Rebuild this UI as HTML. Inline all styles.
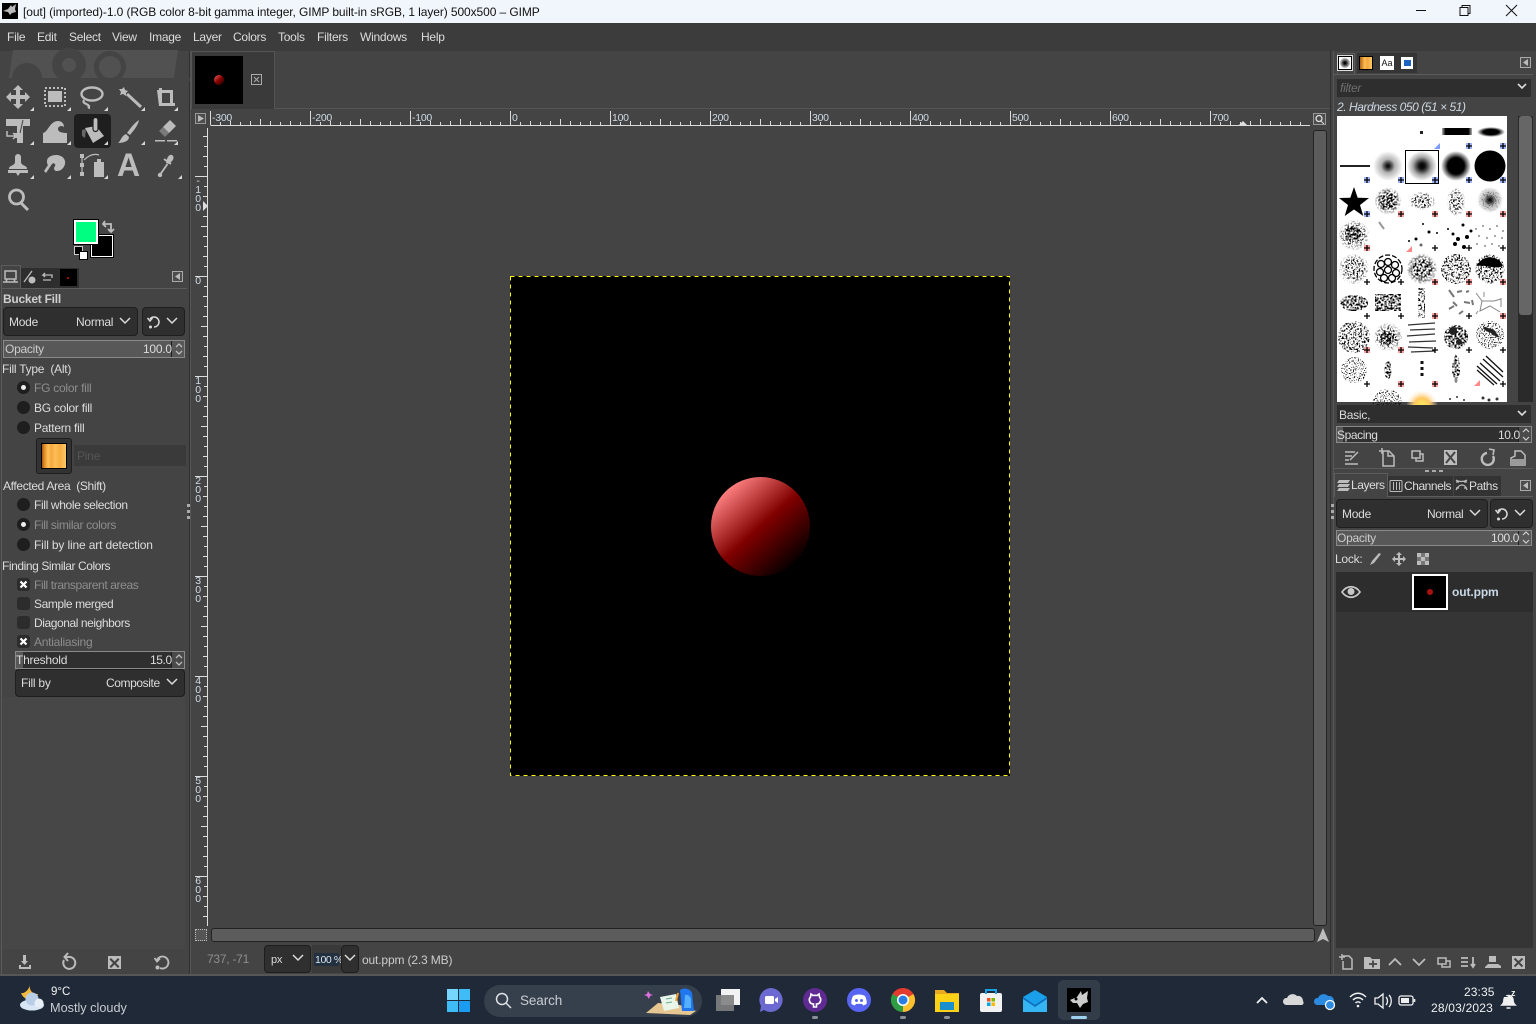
<!DOCTYPE html>
<html><head><meta charset="utf-8"><title>GIMP</title>
<style>
html,body{margin:0;padding:0;width:1536px;height:1024px;overflow:hidden;background:#444;font-family:"Liberation Sans",sans-serif;font-size:12px;color:#dcdcdc}
.a{position:absolute}
.t{position:absolute;white-space:nowrap;line-height:14px;letter-spacing:-.25px}
.d{color:#8e8e8e}
.c{position:absolute;box-sizing:border-box;background:#2f2f2f;border:1px solid #1e1e1e;border-radius:4px}
.s{position:absolute;box-sizing:border-box;border:1px solid #8a8a8a;background:#2f2f2f}
.s i{position:absolute;left:0;top:0;bottom:0;background:#585858}
.s b{position:absolute;right:0;top:0;bottom:0;width:12px;background:#4a4a4a;border-left:1px solid #1e1e1e}
.r{position:absolute;width:13px;height:13px;border-radius:50%;background:#1e1e1e}
.r.on:after{content:"";position:absolute;left:4px;top:4px;width:5px;height:5px;border-radius:50%;background:#eee}
.k{position:absolute;width:13px;height:13px;border-radius:3px;background:#2c2c2c;border:0}
svg{position:absolute;overflow:visible}
</style></head><body>

<!-- title bar -->
<div class="a" style="left:0;top:0;width:1536px;height:23px;background:#f1f6fc"></div>
<div class="a" style="left:2px;top:3px;width:16px;height:16px;background:#000"></div>
<svg style="left:2px;top:3px" width="16" height="16"><path d="M1 8l5-2 3-4 1 2 4-3-1 5 1 3-4 1-2 2-2-3z" fill="#bbb"/></svg>
<div class="t" style="left:23px;top:5px;color:#111;letter-spacing:-.09px">[out] (imported)-1.0 (RGB color 8-bit gamma integer, GIMP built-in sRGB, 1 layer) 500x500 – GIMP</div>
<svg style="left:1410px;top:0" width="120" height="22" fill="none" stroke="#111" stroke-width="1"><path d="M6 10.5h10"/><path d="M50 7.500h8v8h-8zM52 7.500v-2h8v8h-2"/><path d="M96 5l11 11M107 5L96 16"/></svg>

<!-- menu -->
<div class="a" style="left:0;top:23px;width:1536px;height:28px;background:#3c3c3c"></div>
<div class="t" style="left:7px;top:30px">File</div>
<div class="t" style="left:37px;top:30px">Edit</div>
<div class="t" style="left:69px;top:30px">Select</div>
<div class="t" style="left:112px;top:30px">View</div>
<div class="t" style="left:149px;top:30px">Image</div>
<div class="t" style="left:193px;top:30px">Layer</div>
<div class="t" style="left:233px;top:30px">Colors</div>
<div class="t" style="left:278px;top:30px">Tools</div>
<div class="t" style="left:317px;top:30px">Filters</div>
<div class="t" style="left:360px;top:30px">Windows</div>
<div class="t" style="left:421px;top:30px">Help</div>

<!-- panel frames -->
<div class="a" style="left:189px;top:51px;width:1px;height:925px;background:#2f2f2f"></div>
<div class="a" style="left:190px;top:51px;width:1px;height:925px;background:#575757"></div>
<div class="a" style="left:1330px;top:51px;width:1px;height:925px;background:#2f2f2f"></div>
<div class="a" style="left:1333px;top:51px;width:1px;height:925px;background:#575757"></div>
<div class="a" style="left:0;top:974px;width:1536px;height:2px;background:#565656"></div>

<!-- toolbox watermark -->
<svg style="left:0;top:0" width="190" height="80"><path d="M13 50H178L174 78H9Z" fill="#515151"/><circle cx="27" cy="78" r="15" fill="#444"/><circle cx="69" cy="65" r="17" fill="#444"/><circle cx="69" cy="65" r="7" fill="#515151"/><circle cx="110" cy="67" r="16" fill="#444"/><circle cx="110" cy="67" r="11" fill="#515151"/><rect x="0" y="78" width="190" height="3" fill="#444"/></svg>

<!-- active tool -->
<div class="a" style="left:74px;top:114px;width:37px;height:34px;background:#1e1e1e;border-radius:4px"></div>

<!-- tool icons -->
<svg style="left:0;top:0" width="190" height="220" fill="#bcbcbc">
<path d="M18 85l5 5h-3v5h5v-3l5 5-5 5v-3h-5v5h3l-5 5-5-5h3v-5h-5v3l-5-5 5-5v3h5v-5h-3z"/>
<path d="M45 88h20v18H45z" fill="none" stroke="#bcbcbc" stroke-width="2" stroke-dasharray="2 2"/><rect x="48" y="91" width="14" height="11"/>
<ellipse cx="92" cy="94" rx="10.500" ry="6.500" fill="none" stroke="#bcbcbc" stroke-width="2.400"/><path d="M84 100c-2 4 3 3 5 6-1 1 0 2 1 2" fill="none" stroke="#bcbcbc" stroke-width="2.200"/>
<path d="M127 94l14 13" stroke="#bcbcbc" stroke-width="3"/><path d="M124 87l1 3 3 1-2 2 0 3-3-2-3 1 1-3-2-3h3z"/>
<path d="M157 90h2v-2h3v2h11v13h2v3h-16zM162 93v10h8V93z" fill-rule="evenodd"/>
<path d="M6 119h24v7h-7v17h-6v-5h-3v-5h3v-7H6z"/><path d="M23 120l-3 13" stroke="#444" stroke-width="1"/><path d="M7 131v5h9M13 133l3 3-3 3" fill="none" stroke="#bcbcbc" stroke-width="1.500"/>
<path d="M43 143v-10c5-1 7-12 15-12 4 0 6 3 6 6-2-2-6-1-6 2s4 4 9 4v10z"/>
<path d="M82 130l4-1-1 9-3-2z" fill="#666"/><path d="M85 128l11-2 8 10-11 7z"/><path d="M93 129v-9a2.500 2.500 0 015 0v9a2.500 2.500 0 01-5 0z" stroke="#1e1e1e" stroke-width="1.200"/>
<path d="M139 120c-1 6-6 11-9 15l-3-2c3-4 7-10 12-13zM126 134l3 3c0 4-5 6-11 6 3-2 3-7 8-9z"/>
<path d="M170 120l6 6-7 7-6-6z"/><path d="M163 127l6 6-4 4-6-6z" fill="#7a7a7a"/><path d="M155 140h10v1.500h-10zM167 140h10v1.500h-10z"/>
<path d="M15 157a3 3 0 016 0v5c0 2 2 3 4 4 2 1 2 2 2 3H9c0-1 0-2 2-3 2-1 4-2 4-4zM8 170h20v3h-8l-2 3-2-3H8z"/>
<path d="M47 161c0-4 5-6 9-6 6 0 10 4 9 9-1 4-4 7-8 7-2 0-3-1-3-3 0-1 2-2 1-4-1-1-2-1-3 0l-6 9-2-2 4-6c-1-1-1-2-1-4z"/>
<path d="M80 154h4v4h-4zM80 163h4v4h-4zM80 172h4v4h-4z"/><path d="M82 158v5M82 167v5M84 160c4-4 9-7 15-5" fill="none" stroke="#bcbcbc" stroke-width="1.200"/><path d="M97 159h4v3h3v15H94v-15h3z"/>
<circle cx="160" cy="175" r="2.200"/><path d="M160.500 174l7-10" stroke="#bcbcbc" stroke-width="1.800"/><path d="M166 163l1-4c1-3 3-5 5-4 2 1 2 4 0 6l-3 3z"/><path d="M164 159l7 5" stroke="#bcbcbc" stroke-width="1.800"/>
<circle cx="16.500" cy="197" r="7" fill="none" stroke="#bcbcbc" stroke-width="2.800"/><path d="M21 203l7 7" stroke="#bcbcbc" stroke-width="3"/>
<g fill="#d8d8d8"><path d="M34 107v4h-4zM71 107v4h-4zM108 107v4h-4zM145 107v4h-4zM178 107v4h-4zM34 141v4h-4zM71 141v4h-4zM108 141v4h-4zM145 141v4h-4zM178 141v4h-4zM34 175v4h-4zM71 175v4h-4zM108 175v4h-4zM182 175v4h-4z"/></g>
</svg>
<div class="t" style="left:117px;top:149px;font-size:32px;line-height:32px;font-weight:bold;color:#bcbcbc;letter-spacing:0">A</div>

<!-- fg/bg -->
<div class="a" style="left:90px;top:234px;width:24px;height:24px;box-sizing:border-box;background:#000;border:2px solid #fff;outline:1px solid #000;outline-offset:-1px"></div>
<div class="a" style="left:74px;top:220px;width:24px;height:24px;box-sizing:border-box;background:#00ff80;border:2px solid #fff;box-shadow:0 0 0 1px #000"></div>
<div class="a" style="left:74px;top:246px;width:7px;height:7px;background:#000;border:1px solid #ccc"></div>
<div class="a" style="left:79px;top:251px;width:7px;height:7px;background:#fff;border:1px solid #000"></div>
<svg style="left:102px;top:220px" width="13" height="13" fill="none" stroke="#bcbcbc" stroke-width="1.800"><path d="M1 4h8v7M3 1L1 4l3 3M6 9l3 3 3-3"/></svg>

<!-- options tabs -->
<div class="a" style="left:21px;top:268px;width:58px;height:20px;background:#2e2e2e"></div>
<div class="a" style="left:1px;top:265px;width:20px;height:23px;box-sizing:border-box;background:#444;border:1px solid #5c5c5c;border-bottom:0"></div>
<svg style="left:0;top:265px" width="80" height="24" fill="none" stroke="#bcbcbc" stroke-width="1.500"><path d="M5 6h11v8H5zM7 14l-1 3M14 14l1 3M3 17h15"/><path d="M24 17l8-11M47 10h-4l2-2m-2 2l2 2M43 10h9v3M51 15h-8" stroke-width="1.300"/><circle cx="32" cy="15" r="3.500" fill="#bcbcbc" stroke="none"/></svg>
<div class="a" style="left:60px;top:269px;width:17px;height:17px;background:#000"></div>
<div class="a" style="left:67px;top:277px;width:2px;height:2px;background:#a00"></div>
<svg style="left:172px;top:271px" width="11" height="11"><rect x=".5" y=".5" width="10" height="10" fill="#4d4d4d" stroke="#aaa"/><path d="M8 2v7L3 5.500z" fill="#bbb"/></svg>
<div class="a" style="left:1px;top:288px;width:186px;height:1px;background:#5c5c5c"></div>
<div class="a" style="left:1px;top:288px;width:1px;height:686px;background:#5c5c5c"></div>

<!-- tool options -->
<div class="t" style="left:3px;top:292px;font-weight:bold;color:#cfcfcf">Bucket Fill</div>
<div class="c" style="left:3px;top:307px;width:135px;height:29px"></div>
<div class="t" style="left:9px;top:315px">Mode</div><div class="t" style="left:76px;top:315px">Normal</div>
<div class="c" style="left:142px;top:307px;width:43px;height:29px"></div>
<svg style="left:0;top:300px" width="190" height="40" fill="none" stroke="#dcdcdc" stroke-width="1.500"><path d="M120 18l5 5 5-5M167 18l5 5 5-5"/><path d="M150 19a5 5 0 114 8M147.500 18l2.500 3 2.500-3"/><circle cx="150.500" cy="27" r="1.500" fill="#dcdcdc" stroke="none"/></svg>

<div class="s" style="left:3px;top:340px;width:182px;height:18px;background:#585858"><b style="background:#585858"></b></div>
<div class="t" style="left:5px;top:342px;color:#ccc">Opacity</div><div class="t" style="left:143px;top:342px">100.0</div>
<div class="t" style="left:2px;top:362px">Fill Type&nbsp; (Alt)</div>
<div class="r on" style="left:17px;top:381px"></div><div class="t d" style="left:34px;top:381px">FG color fill</div>
<div class="r" style="left:17px;top:401px"></div><div class="t" style="left:34px;top:401px">BG color fill</div>
<div class="r" style="left:17px;top:421px"></div><div class="t" style="left:34px;top:421px">Pattern fill</div>
<div class="a" style="left:36px;top:438px;width:36px;height:36px;box-sizing:border-box;background:#333;border:1px solid #1e1e1e;border-radius:3px"></div>
<div class="a" style="left:41px;top:443px;width:26px;height:26px;box-sizing:border-box;border:1px solid #000;background:linear-gradient(90deg,#a85c10 0,#e8932b 12%,#ffc15a 25%,#f3a83f 40%,#ffbe55 55%,#f6ad44 75%,#ffc866 100%)"></div>
<div class="a" style="left:74px;top:445px;width:112px;height:21px;background:#3a3a3a"></div>
<div class="t" style="left:77px;top:449px;color:#555">Pine</div>
<div class="t" style="left:3px;top:479px;letter-spacing:-.35px">Affected Area&nbsp; (Shift)</div>
<div class="r" style="left:17px;top:498px"></div><div class="t" style="left:34px;top:498px;letter-spacing:-.35px">Fill whole selection</div>
<div class="r on" style="left:17px;top:518px"></div><div class="t d" style="left:34px;top:518px;letter-spacing:-.35px">Fill similar colors</div>
<div class="r" style="left:17px;top:538px"></div><div class="t" style="left:34px;top:538px;letter-spacing:-.15px">Fill by line art detection</div>
<div class="t" style="left:2px;top:559px;letter-spacing:-.42px">Finding Similar Colors</div>
<div class="k" style="left:17px;top:578px"></div><div class="t d" style="left:34px;top:578px;letter-spacing:-.38px">Fill transparent areas</div>
<div class="k" style="left:17px;top:597px"></div><div class="t" style="left:34px;top:597px;letter-spacing:-.42px">Sample merged</div>
<div class="k" style="left:17px;top:616px"></div><div class="t" style="left:34px;top:616px;letter-spacing:-.42px">Diagonal neighbors</div>
<div class="k" style="left:17px;top:635px"></div><div class="t d" style="left:34px;top:635px">Antialiasing</div>
<svg style="left:17px;top:578px" width="13" height="70" stroke="#fff" stroke-width="2.200"><path d="M3.500 3.500l6 6M9.500 3.500l-6 6M3.500 60.500l6 6M9.500 60.500l-6 6"/></svg>
<div class="s" style="left:15px;top:651px;width:170px;height:18px"><i style="width:7px"></i><b></b></div>
<div class="t" style="left:16px;top:653px">Threshold</div><div class="t" style="left:150px;top:653px;letter-spacing:-.4px">15.0</div>
<div class="c" style="left:15px;top:669px;width:170px;height:28px"></div>
<div class="t" style="left:21px;top:676px">Fill by</div><div class="t" style="left:106px;top:676px;letter-spacing:-.4px">Composite</div>
<svg style="left:0;top:340px" width="190" height="350" fill="none" stroke="#bbb" stroke-width="1.300"><path d="M176 7l3-3 3 3M176 11l3 3 3-3M176 318l3-3 3 3M176 322l3 3 3-3"/><path d="M167 339l5 5 5-5" stroke="#dcdcdc" stroke-width="1.500"/></svg>
<div class="a" style="left:3px;top:697px;width:182px;height:252px;background:#474747"></div>
<div class="a" style="left:187px;top:504px;width:3px;height:18px;background:repeating-linear-gradient(#aaa 0 3px,transparent 3px 6px)"></div>
<svg style="left:0;top:950px" width="190" height="24" fill="#bcbcbc"><path d="M23 5h3v6h2l-3.500 4L21 11h2zM19 15h2v2h8v-2h2v4H19z"/><path d="M64 10a6 6 0 104-3h-3M68 3l-3.500 4 3.500 4" fill="none" stroke="#bcbcbc" stroke-width="2"/><path d="M108 6h13v13h-13z"/><path d="M111 8l3.500 3.500L118 8l1.500 1.500-3.500 3.500 3.500 3.500-1.500 1.500-3.500-3.500-3.500 3.500-1.500-1.500 3.500-3.500L109.500 9.500z" fill="#444"/><path d="M157 10a6 6 0 113 8M154.500 8l2.500 3.500 3-3" fill="none" stroke="#bcbcbc" stroke-width="1.800"/><circle cx="157.500" cy="17.500" r="2"/></svg>

<!-- image tab -->
<div class="a" style="left:191px;top:51px;width:84px;height:58px;box-sizing:border-box;background:#3a3a3a;border:1px solid #555;border-bottom:0"></div>
<div class="a" style="left:195px;top:56px;width:48px;height:48px;background:#000"></div>
<div class="a" style="left:214px;top:75px;width:10px;height:10px;border-radius:50%;background:linear-gradient(138deg,#e66 0,#800 50%,#100 100%)"></div>
<svg style="left:251px;top:74px" width="12" height="12" fill="none" stroke="#aaa"><path d="M.5.500h10v10H.500zM3 3l5 5M8 3L3 8"/></svg>
<div class="a" style="left:275px;top:108px;width:1055px;height:1px;background:#555"></div>

<!-- rulers -->
<svg style="left:0;top:0" width="1536" height="976" stroke="#dcdcdc" fill="none">
<defs>
<pattern id="hr" patternUnits="userSpaceOnUse" x="210" y="110" width="100" height="16"><path d="M.5 1v15M10.500 12v4M20.500 11v5M30.500 12v4M40.500 11v5M50.500 9v7M60.500 11v5M70.500 12v4M80.500 11v5M90.500 12v4"/></pattern>
<pattern id="vr" patternUnits="userSpaceOnUse" x="192" y="76" width="16" height="100"><path d="M3 .5h13M12 10.500h4M11 20.500h5M12 30.500h4M11 40.500h5M9 50.500h7M11 60.500h5M12 70.500h4M11 80.500h5M12 90.500h4"/></pattern>
</defs>
<rect x="210" y="110" width="1100" height="15.500" fill="url(#hr)" stroke="none"/>
<path d="M211 125.500H1310"/>
<rect x="192" y="127" width="16" height="798" fill="url(#vr)" stroke="none"/>
<path d="M207.500 128V926"/>
</svg>
<svg style="left:195px;top:113px" width="12" height="12"><rect x=".5" y=".5" width="10" height="10" fill="#4d4d4d" stroke="#999"/><path d="M3 2v7l6-3.500z" fill="#bbb"/></svg>
<svg style="left:1313px;top:113px" width="14" height="13"><rect x=".5" y=".5" width="12" height="11" fill="#4d4d4d" stroke="#999"/><circle cx="6" cy="5.500" r="3" fill="none" stroke="#ddd" stroke-width="1.300"/><path d="M8 8l3 3" stroke="#ddd"/></svg>
<div style="font-size:10.500px;color:#cfdbe6">
<div class="t" style="left:212px;top:112px;line-height:13px">-300</div><div class="t" style="left:312px;top:112px;line-height:13px">-200</div><div class="t" style="left:412px;top:112px;line-height:13px">-100</div><div class="t" style="left:512px;top:112px;line-height:13px">0</div><div class="t" style="left:612px;top:112px;line-height:13px">100</div><div class="t" style="left:712px;top:112px;line-height:13px">200</div><div class="t" style="left:812px;top:112px;line-height:13px">300</div><div class="t" style="left:912px;top:112px;line-height:13px">400</div><div class="t" style="left:1012px;top:112px;line-height:13px">500</div><div class="t" style="left:1112px;top:112px;line-height:13px">600</div><div class="t" style="left:1212px;top:112px;line-height:13px">700</div>
<div class="t" style="left:195px;top:177px;line-height:9px;text-align:center;width:6px">-<br>1<br>0<br>0</div>
<div class="t" style="left:195px;top:277px;line-height:9px;text-align:center;width:6px">0</div>
<div class="t" style="left:195px;top:377px;line-height:9px;text-align:center;width:6px">1<br>0<br>0</div>
<div class="t" style="left:195px;top:477px;line-height:9px;text-align:center;width:6px">2<br>0<br>0</div>
<div class="t" style="left:195px;top:577px;line-height:9px;text-align:center;width:6px">3<br>0<br>0</div>
<div class="t" style="left:195px;top:677px;line-height:9px;text-align:center;width:6px">4<br>0<br>0</div>
<div class="t" style="left:195px;top:777px;line-height:9px;text-align:center;width:6px">5<br>0<br>0</div>
<div class="t" style="left:195px;top:877px;line-height:9px;text-align:center;width:6px">6<br>0<br>0</div>
</div>
<svg style="left:203px;top:201px" width="5" height="10"><path d="M0 0l5 5-5 5z" fill="#ddd"/></svg>
<svg style="left:1238px;top:120px" width="10" height="6"><path d="M0 6l5-5 5 5z" fill="#ddd"/></svg>

<!-- image -->
<div class="a" style="left:510px;top:276px;width:500px;height:500px;background:#000"></div>
<svg style="left:510px;top:276px" width="500" height="500" fill="none"><rect x=".5" y=".5" width="499" height="499" stroke="#ff0" stroke-dasharray="4 4"/></svg>
<div class="a" style="left:711px;top:477px;width:99px;height:99px;border-radius:50%;background:linear-gradient(138deg,#ff9a9a 8%,#ff8080 14%,#800000 50%,#000 88%)"></div>

<!-- scrollbars -->
<div class="a" style="left:1313px;top:130px;width:14px;height:796px;box-sizing:border-box;background:#5c5c5c;border:1px solid #222;border-radius:3px"></div>
<div class="a" style="left:211px;top:928px;width:1104px;height:14px;box-sizing:border-box;background:#5c5c5c;border:1px solid #222;border-radius:3px"></div>
<div class="a" style="left:195px;top:929px;width:12px;height:12px;box-sizing:border-box;background:#555;border:1px dotted #bbb"></div>
<svg style="left:1316px;top:927px" width="14" height="16"><path d="M7 1l6 14-6-3-6 3z" fill="#bdbdbd"/></svg>

<!-- status bar -->
<div class="t" style="left:207px;top:952px;color:#8e8e8e">737, -71</div>
<div class="c" style="left:264px;top:945px;width:47px;height:28px"></div>
<div class="t" style="left:271px;top:953px;font-size:11px">px</div>
<div class="a" style="left:312px;top:945px;width:29px;height:28px;background:#3a3a3a"></div>
<div class="a" style="left:314px;top:953px;width:25px;height:13px;background:#22303f"></div>
<div class="t" style="left:315px;top:953px;font-size:10.500px;color:#d8e4ef;letter-spacing:-.4px">100 %</div>
<div class="c" style="left:341px;top:945px;width:18px;height:28px"></div>
<svg style="left:264px;top:945px" width="100" height="28" fill="none" stroke="#dcdcdc" stroke-width="1.500"><path d="M29 10l5 5 5-5M81 10l5 5 5-5"/></svg>
<div class="t" style="left:362px;top:953px;color:#ccc;letter-spacing:-.15px">out.ppm (2.3 MB)</div>

<!-- right dock top -->
<div class="a" style="left:1337px;top:53px;width:18px;height:21px;box-sizing:border-box;background:#444;border:1px solid #5c5c5c;border-bottom:0"></div>
<div class="a" style="left:1357px;top:53px;width:60px;height:20px;background:#353535"></div>
<div class="a" style="left:1338px;top:56px;width:14px;height:14px;box-sizing:border-box;background:radial-gradient(circle,#000 10%,#aaa 50%,#fff 65%);border:1px solid #000;outline:1px solid #ddd"></div>
<div class="a" style="left:1359px;top:56px;width:14px;height:14px;box-sizing:border-box;border:1px solid #000;background:linear-gradient(90deg,#b36412,#ffbe55 40%,#f3a83f 60%,#ffc866)"></div>
<div class="a" style="left:1380px;top:56px;width:14px;height:14px;background:#fff;color:#111;font-size:9px;line-height:14px;text-align:center">Aa</div>
<div class="a" style="left:1401px;top:57px;width:12px;height:12px;background:#fff"></div>
<div class="a" style="left:1404px;top:60px;width:7px;height:6px;background:#1a63c0"></div>
<svg style="left:1520px;top:57px" width="11" height="11"><rect x=".5" y=".5" width="10" height="10" fill="#4d4d4d" stroke="#aaa"/><path d="M8 2v7L3 5.500z" fill="#bbb"/></svg>
<div class="a" style="left:1334px;top:74px;width:199px;height:1px;background:#5c5c5c"></div>
<div class="a" style="left:1337px;top:79px;width:194px;height:18px;background:#2e2e2e"></div>
<div class="t" style="left:1340px;top:81px;font-style:italic;color:#6e6e6e">filter</div>
<div class="t" style="left:1337px;top:100px;font-style:italic;color:#cdd8e2;letter-spacing:-.45px">2. Hardness 050 (51 × 51)</div>
<svg style="left:1516px;top:82px" width="12" height="10" fill="none" stroke="#dcdcdc" stroke-width="1.600"><path d="M2 2l4 4 4-4"/></svg>

<!-- brushes -->
<svg style="left:1337px;top:116px" width="170" height="286" viewBox="0 0 170 286">
<defs>
<filter id="n1" x="0" y="0" width="100%" height="100%"><feTurbulence type="fractalNoise" baseFrequency=".55" numOctaves="2" seed="4"/><feColorMatrix values="0 0 0 0 0 0 0 0 0 0 0 0 0 0 0 7 0 0 0 -3.500"/><feComposite in2="SourceGraphic" operator="in"/><feGaussianBlur stdDeviation=".35"/></filter>
<filter id="n2" x="0" y="0" width="100%" height="100%"><feTurbulence type="fractalNoise" baseFrequency=".8" numOctaves="1" seed="9"/><feColorMatrix values="0 0 0 0 0 0 0 0 0 0 0 0 0 0 0 8 0 0 0 -4.300"/><feComposite in2="SourceGraphic" operator="in"/><feGaussianBlur stdDeviation=".35"/></filter>
<filter id="n3" x="0" y="0" width="100%" height="100%"><feTurbulence type="fractalNoise" baseFrequency=".5" numOctaves="2" seed="2"/><feColorMatrix values="0 0 0 0 0 0 0 0 0 0 0 0 0 0 0 6 0 0 0 -2.600"/><feComposite in2="SourceGraphic" operator="in"/><feGaussianBlur stdDeviation=".35"/></filter>
<radialGradient id="g1"><stop offset="0" stop-color="#000"/><stop offset=".12" stop-color="#222"/><stop offset=".45" stop-color="#000" stop-opacity=".3"/><stop offset="1" stop-color="#000" stop-opacity="0"/></radialGradient>
<radialGradient id="g2"><stop offset="0" stop-color="#000"/><stop offset=".2" stop-color="#111"/><stop offset=".6" stop-color="#000" stop-opacity=".35"/><stop offset="1" stop-color="#000" stop-opacity="0"/></radialGradient>
<radialGradient id="g3"><stop offset="0" stop-color="#000"/><stop offset=".55" stop-color="#000"/><stop offset="1" stop-color="#000" stop-opacity="0"/></radialGradient>
<radialGradient id="g4"><stop offset="0" stop-color="#fff060"/><stop offset=".5" stop-color="#ffc860"/><stop offset="1" stop-color="#ffe8d0" stop-opacity="0"/></radialGradient>
<radialGradient id="g5"><stop offset="0" stop-color="#111"/><stop offset=".55" stop-color="#222"/><stop offset="1" stop-color="#333" stop-opacity=".15"/></radialGradient>
<linearGradient id="bb"><stop offset="0" stop-color="#000" stop-opacity=".3"/><stop offset=".12" stop-color="#000"/><stop offset=".88" stop-color="#000"/><stop offset="1" stop-color="#000" stop-opacity=".3"/></linearGradient>
<path id="p" d="M-3 0H3M0-3V3" stroke="#000" stroke-width="1.300"/>
</defs>
<rect width="170" height="286" fill="#fff"/>
<!-- row0 -->
<rect x="83" y="15" width="3" height="3" fill="#222"/>
<rect x="105" y="12" width="30" height="7" fill="url(#bb)"/>
<ellipse cx="154" cy="16" rx="14" ry="5" fill="url(#g3)"/>
<!-- row1 -->
<rect x="3" y="49" width="30" height="2" fill="#222"/>
<circle cx="51" cy="50" r="15" fill="url(#g1)"/>
<circle cx="85" cy="50" r="15" fill="url(#g2)"/>
<circle cx="119" cy="50" r="15" fill="url(#g3)"/>
<circle cx="153" cy="50" r="15.500" fill="#000"/>
<rect x="68.500" y="34.500" width="33" height="33" fill="none" stroke="#000"/>
<!-- row2 -->
<path d="M17 71l3.700 10.800 11.300.2-9 7 3.300 11-9.300-6.500-9.300 6.500 3.300-11-9-7 11.300-.2z" fill="#000"/>
<circle cx="51" cy="85" r="13" fill="url(#g5)" filter="url(#n3)"/>
<circle cx="51" cy="85" r="7" fill="#222" filter="url(#n3)"/>
<ellipse cx="85" cy="85" rx="13" ry="9" fill="url(#g5)" filter="url(#n1)"/>
<ellipse cx="119" cy="86" rx="9" ry="14" fill="url(#g5)" filter="url(#n1)"/>
<circle cx="153" cy="84" r="13" fill="url(#g1)"/>
<circle cx="153" cy="84" r="12" fill="url(#g5)" opacity=".5" filter="url(#n2)"/>
<!-- row3 -->
<circle cx="17" cy="119" r="15" fill="url(#g5)" filter="url(#n1)"/><circle cx="16" cy="118" r="8" fill="#222" filter="url(#n3)"/>
<path d="M42 106l5 7" stroke="#999" stroke-width="2"/>
<circle cx="86" cy="108" r="1" /><circle cx="79" cy="123" r="1.500"/><circle cx="92" cy="116" r="1.500"/><circle cx="84" cy="129" r="1.500" fill="#666"/><circle cx="72" cy="125" r="1"/><circle cx="100" cy="117" r="1"/>
<circle cx="121" cy="123" r="2"/><circle cx="126" cy="109" r="1.500"/><circle cx="116" cy="118" r="1.500"/><circle cx="130" cy="121" r="2"/><circle cx="111" cy="113" r="1"/><circle cx="118" cy="128" r="2"/><circle cx="127" cy="131" r="2"/><circle cx="134" cy="115" r="1.500"/>
<g fill="#222"><circle cx="139" cy="113" r=".7"/><circle cx="146" cy="110" r=".7"/><circle cx="153" cy="113" r=".7"/><circle cx="160" cy="110" r=".7"/><circle cx="166" cy="115" r=".7"/><circle cx="142" cy="120" r=".7"/><circle cx="150" cy="122" r=".7"/><circle cx="158" cy="120" r=".7"/><circle cx="165" cy="122" r=".7"/><circle cx="140" cy="128" r=".7"/><circle cx="148" cy="130" r=".7"/><circle cx="155" cy="128" r=".7"/><circle cx="162" cy="130" r=".7"/></g>
<!-- row4 -->
<circle cx="17" cy="153" r="15" fill="url(#g5)" filter="url(#n1)"/>
<g fill="none" stroke="#000" stroke-width="1.300"><circle cx="51" cy="153" r="14" stroke-dasharray="5 2"/><circle cx="44" cy="148" r="3.500"/><circle cx="51" cy="146" r="3.500"/><circle cx="58" cy="149" r="3.500"/><circle cx="43" cy="156" r="3.500"/><circle cx="51" cy="154" r="3.500"/><circle cx="59" cy="157" r="3.500"/><circle cx="47" cy="162" r="3.500"/><circle cx="55" cy="162" r="3.500"/></g>
<circle cx="85" cy="153" r="15" fill="url(#g5)" filter="url(#n3)"/>
<circle cx="119" cy="153" r="15" fill="#222" filter="url(#n1)"/>
<circle cx="153" cy="153" r="14.500" fill="#222" filter="url(#n1)"/><path d="M140 150a14 14 0 0126 0c-8 4-18-2-26 0z" fill="#000"/>
<!-- row5 -->
<ellipse cx="17" cy="187" rx="14" ry="8" fill="#000" filter="url(#n3)"/>
<rect x="38" y="178" width="26" height="17" fill="#333" filter="url(#n3)"/>
<rect x="81" y="172" width="7" height="30" fill="#444" filter="url(#n1)"/>
<g stroke="#777" stroke-width="2"><path d="M112 174l5 7M120 176l5-1M129 176l3-1M116 186l4 4M127 186l6 1M112 193l5-3M122 198l4-3M135 184l1 5"/></g>
<g fill="none" stroke="#888"><path d="M139 177l6 8 12 0 7-2M145 185l-2 10 10-5 10 6M147 176v5M141 195l-2 3M164 182v9"/></g>
<!-- row6 -->
<circle cx="17" cy="221" r="16" fill="#555" filter="url(#n1)"/>
<circle cx="51" cy="221" r="14" fill="url(#g5)" filter="url(#n1)"/><circle cx="50" cy="222" r="7" fill="#222" filter="url(#n3)"/>
<g stroke="#333" stroke-width="1.200"><path d="M71 209l27-2M73 214l25-1M70 220l28-2M72 226l27-1M71 231l25 1M74 236l24-1"/></g>
<circle cx="119" cy="221" r="12" fill="#333" filter="url(#n3)"/><circle cx="116" cy="215" r="4" fill="#222"/><circle cx="122" cy="226" r="3" fill="#222"/>
<circle cx="153" cy="219" r="14" fill="#777" filter="url(#n2)"/><path d="M146 212c3-3 6 2 10 1 3 3 4 6 7 8-4 1-6-2-9-4-3-1-6-2-8-5z" fill="#222"/>
<!-- row7 -->
<circle cx="17" cy="254" r="13" fill="#999" filter="url(#n2)"/>
<ellipse cx="51" cy="254" rx="3.500" ry="9" fill="#888" filter="url(#n3)"/>
<path d="M85 245v16" stroke="#111" stroke-width="3" stroke-dasharray="3 3"/>
<path d="M119 238c3 4 4 9 4 16 0 5-2 8-4 9-2-1-4-4-4-9 0-7 1-12 4-16z" fill="#000" filter="url(#n3)"/><ellipse cx="119" cy="264" rx="1.500" ry="3" fill="#888"/>
<path d="M140 250l20 18M143 247l20 18M146 243l20 18M149 240l17 16M140 254l17 15" stroke="#111" stroke-width="1.300"/>
<!-- row8 -->
<circle cx="50" cy="288" r="15" fill="#999" filter="url(#n2)"/>
<circle cx="85" cy="290" r="16" fill="url(#g4)"/>
<g fill="#333"><circle cx="113" cy="283" r="1"/><circle cx="120" cy="281" r="1"/><circle cx="127" cy="284" r="1"/><circle cx="146" cy="282" r="1.500"/><circle cx="152" cy="284" r="1.500"/><circle cx="160" cy="283" r="1.500"/></g>
<!-- badges -->
<g>
<g fill="#9fb5ff"><rect x="27" y="61" width="6" height="6"/><rect x="61" y="61" width="6" height="6"/><rect x="95" y="61" width="6" height="6"/><rect x="129" y="61" width="6" height="6"/><rect x="163" y="61" width="6" height="6"/><rect x="27" y="95" width="6" height="6"/><rect x="129" y="27" width="6" height="6"/><rect x="163" y="27" width="6" height="6"/></g>
<g fill="#ffa0a0"><rect x="61" y="95" width="6" height="6"/><rect x="95" y="95" width="6" height="6"/><rect x="129" y="95" width="6" height="6"/><rect x="163" y="95" width="6" height="6"/><rect x="27" y="129" width="6" height="6"/><rect x="95" y="163" width="6" height="6"/><rect x="129" y="163" width="6" height="6"/><rect x="163" y="163" width="6" height="6"/><rect x="95" y="197" width="6" height="6"/><rect x="163" y="197" width="6" height="6"/><rect x="27" y="231" width="6" height="6"/><rect x="61" y="231" width="6" height="6"/><rect x="61" y="265" width="6" height="6"/><rect x="95" y="265" width="6" height="6"/></g>
<path d="M69 136h6v-6zM137 270h6v-6z" fill="#ff8a8a"/>
<path d="M97 33h6v-6z" fill="#7e9bff"/>
<use href="#p" x="132" y="30"/><use href="#p" x="166" y="30"/>
<use href="#p" x="30" y="64"/><use href="#p" x="64" y="64"/><use href="#p" x="98" y="64"/><use href="#p" x="132" y="64"/><use href="#p" x="166" y="64"/>
<use href="#p" x="30" y="98"/><use href="#p" x="64" y="98"/><use href="#p" x="98" y="98"/><use href="#p" x="132" y="98"/><use href="#p" x="166" y="98"/>
<use href="#p" x="30" y="132"/><use href="#p" x="98" y="132"/><use href="#p" x="132" y="132"/><use href="#p" x="166" y="132"/>
<use href="#p" x="30" y="166"/><use href="#p" x="64" y="166"/><use href="#p" x="98" y="166"/><use href="#p" x="132" y="166"/><use href="#p" x="166" y="166"/>
<use href="#p" x="30" y="200"/><use href="#p" x="64" y="200"/><use href="#p" x="98" y="200"/><use href="#p" x="132" y="200"/><use href="#p" x="166" y="200"/>
<use href="#p" x="30" y="234"/><use href="#p" x="64" y="234"/><use href="#p" x="98" y="234"/><use href="#p" x="132" y="234"/><use href="#p" x="166" y="234"/>
<use href="#p" x="30" y="268"/><use href="#p" x="64" y="268"/><use href="#p" x="98" y="268"/><use href="#p" x="166" y="268"/>
</g>
</svg>
<div class="a" style="left:1518px;top:116px;width:15px;height:286px;background:#2a2a2a"></div>
<div class="a" style="left:1519px;top:116px;width:13px;height:199px;background:#666;border-radius:3px"></div>

<div class="a" style="left:1337px;top:405px;width:194px;height:18px;background:#2e2e2e"></div>
<div class="t" style="left:1339px;top:408px">Basic,</div>
<svg style="left:1516px;top:409px" width="12" height="10" fill="none" stroke="#dcdcdc" stroke-width="1.600"><path d="M2 2l4 4 4-4"/></svg>
<div class="s" style="left:1336px;top:426px;width:196px;height:17px"><i style="width:6px"></i><b></b></div>
<div class="t" style="left:1337px;top:428px;letter-spacing:-.4px">Spacing</div><div class="t" style="left:1498px;top:428px;letter-spacing:-.4px">10.0</div>
<svg style="left:1521px;top:427px" width="10" height="15" fill="none" stroke="#ccc" stroke-width="1.200"><path d="M2 5l3-3 3 3M2 10l3 3 3-3"/></svg>
<svg style="left:1336px;top:445px" width="196" height="24" fill="none" stroke="#bcbcbc" stroke-width="1.500">
<path d="M9 7h10M9 11h7M9 15h4M9 19h13M14 15l8-8"/>
<path d="M47 6h6l5 5v10H47zM52 6v5h6M43 6h6M46 3v6"/>
<path d="M76 6h8v7h-8zM80 13v3h7V9h-3"/>
<rect x="108" y="5" width="13" height="15" fill="#bcbcbc" stroke="none"/><path d="M110 7l9 11M119 7l-9 11" stroke="#444" stroke-width="2"/>
<path d="M151 8a6 6 0 106 3" stroke-width="2.400"/><path d="M153 4l5 1-1 5" stroke-width="1.600"/>
<path d="M175 20v-7l4-2V6h6l4 4v10z" /><path d="M175 14h14v6h-14z" fill="#9a9a9a" stroke="none"/>
</svg>
<div class="a" style="left:1425px;top:470px;width:19px;height:2px;background:repeating-linear-gradient(90deg,#aaa 0 4px,transparent 4px 7px)"></div>
<div class="a" style="left:1334px;top:468px;width:199px;height:1px;background:#5a5a5a"></div>

<!-- layers tabs -->
<div class="a" style="left:1388px;top:476px;width:113px;height:20px;background:#333"></div>
<div class="a" style="left:1453px;top:476px;width:1px;height:20px;background:#444"></div>
<div class="a" style="left:1334px;top:473px;width:54px;height:24px;box-sizing:border-box;background:#444;border:1px solid #5c5c5c;border-bottom:0"></div>
<div class="a" style="left:1388px;top:496px;width:145px;height:1px;background:#5c5c5c"></div>
<svg style="left:1336px;top:477px" width="165" height="18" fill="none" stroke="#bcbcbc"><path d="M3 3h11l-2 3H1zM3 7h11l-2 3H1zM3 11h11l-2 3H1z" fill="#bcbcbc" stroke="none"/><rect x="54" y="3.500" width="12" height="11" rx="1"/><path d="M57.500 5v8M60.500 5v8M63.500 5v8"/><path d="M120 3c3 2 8 2 11 0M120 13c2-4 4-5 6-5s4 1 5 5M120 5h3M128 5h3M120 11h3M128 11h3" stroke-width="1.300"/></svg>
<div class="t" style="left:1351px;top:478px;letter-spacing:-.4px">Layers</div><div class="t" style="left:1404px;top:479px;letter-spacing:-.45px">Channels</div><div class="t" style="left:1469px;top:479px;letter-spacing:-.4px">Paths</div>
<svg style="left:1520px;top:480px" width="11" height="11"><rect x=".5" y=".5" width="10" height="10" fill="#4d4d4d" stroke="#aaa"/><path d="M8 2v7L3 5.500z" fill="#bbb"/></svg>

<div class="c" style="left:1336px;top:499px;width:152px;height:29px"></div>
<div class="t" style="left:1342px;top:507px">Mode</div><div class="t" style="left:1427px;top:507px;letter-spacing:-.4px">Normal</div>
<div class="c" style="left:1490px;top:499px;width:43px;height:29px"></div>
<svg style="left:1460px;top:505px" width="75" height="18" fill="none" stroke="#dcdcdc" stroke-width="1.500"><path d="M10 5l5 5 5-5M55 5l5 5 5-5"/><path d="M38 6a5 5 0 114 8M35.500 5l2.500 3 2.500-3"/><circle cx="38.500" cy="14" r="1.500" fill="#dcdcdc" stroke="none"/></svg>
<div class="s" style="left:1336px;top:530px;width:196px;height:16px;background:#585858"><b style="background:#585858"></b></div>
<div class="t" style="left:1337px;top:531px;color:#ccc">Opacity</div><div class="t" style="left:1491px;top:531px;letter-spacing:-.4px">100.0</div>
<svg style="left:1521px;top:531px" width="10" height="14" fill="none" stroke="#ccc" stroke-width="1.200"><path d="M2 4l3-3 3 3M2 9l3 3 3-3"/></svg>
<div class="t" style="left:1335px;top:552px">Lock:</div>
<svg style="left:1368px;top:551px" width="65" height="16" fill="#bcbcbc"><path d="M2 14l2-4 7-8 2 1-7 9z"/><path d="M31 1l3 3h-2v3h3V5l3 3-3 3V9h-3v3h2l-3 3-3-3h2V9h-3v2l-3-3 3-3v2h3V4h-2z"/><path d="M49 2h4v4h-4zM57 2h4v4h-4zM53 6h4v4h-4zM49 10h4v4h-4zM57 10h4v4h-4z"/><path d="M53 2h4v4h-4zM49 6h4v4h-4zM57 6h4v4h-4zM53 10h4v4h-4z" fill="#777"/></svg>

<!-- layer list -->
<div class="a" style="left:1336px;top:612px;width:197px;height:336px;background:#353535"></div>
<div class="a" style="left:1336px;top:572px;width:197px;height:40px;background:#2d2d2d"></div>
<svg style="left:1341px;top:585px" width="20" height="14" fill="none" stroke="#c8c8c8" stroke-width="1.700"><path d="M1 7c5-7 13-7 18 0-5 7-13 7-18 0z"/><circle cx="10" cy="6.500" r="3.500" fill="#c8c8c8" stroke="none"/></svg>
<div class="a" style="left:1412px;top:574px;width:36px;height:36px;box-sizing:border-box;background:#000;border:2px solid #fff"></div>
<div class="a" style="left:1427px;top:589px;width:6px;height:6px;border-radius:50%;background:#a11"></div>
<div class="t" style="left:1452px;top:585px;font-weight:bold;color:#c8d8e6;letter-spacing:-.1px">out.ppm</div>
<div class="a" style="left:1331px;top:504px;width:3px;height:18px;background:repeating-linear-gradient(#aaa 0 3px,transparent 3px 6px)"></div>

<!-- layer bottom icons -->
<svg style="left:1338px;top:952px" width="190" height="20" fill="none" stroke="#bcbcbc" stroke-width="1.500"><path d="M5 4h6l3 3v10H5V9M1 5h6M4 2v6"/><path d="M26 5h6l2 2h8v10H26z" fill="#bcbcbc" stroke="none"/><path d="M31 12h8M35 8.500v7" stroke="#444" stroke-width="1.800"/><path d="M51 13l6-6 6 6M75 7l6 6 6-6" stroke-width="1.800"/><path d="M100 6h8v6h-8zM104 12v3h8V9h-4"/><path d="M123 6h7M123 10h7M123 14h7M135 5v10M133 12l2 3 2-3" stroke-width="1.800"/><path d="M151 4h7v6h-7zM147 15l3-3h10l3 2v2H147z" fill="#bcbcbc" stroke="none"/><rect x="174" y="4" width="13" height="13" fill="#bcbcbc" stroke="none"/><path d="M176.500 6.500l8 8M184.500 6.500l-8 8" stroke="#444" stroke-width="2"/></svg>

<!-- taskbar -->
<div class="a" style="left:0;top:976px;width:1536px;height:48px;background:#1f2937"></div>
<svg style="left:18px;top:985px" width="28" height="28"><path d="M12 0c-1 5 2 9 8 9-1 5-5 7-9 6-4-1-7-4-8-7 3 1 8-3 9-8z" fill="#f4b93c"/><ellipse cx="14" cy="20" rx="12" ry="5.500" fill="#d9e6f5"/><circle cx="14" cy="14" r="6.500" fill="#b9cde6"/><circle cx="21" cy="18" r="4.500" fill="#e8eef6"/></svg>
<div class="t" style="left:51px;top:985px;font-size:11.500px;color:#f2f2f2;letter-spacing:0">9°C</div>
<div class="t" style="left:50px;top:1001px;font-size:12.700px;color:#c8cdd3;letter-spacing:0">Mostly cloudy</div>
<svg style="left:447px;top:989px" width="24" height="24"><rect width="11" height="11" fill="#76d6fb"/><rect x="12" width="11" height="11" fill="#3fbcf6"/><rect y="12" width="11" height="11" fill="#3fbcf6"/><rect x="12" y="12" width="11" height="11" fill="#1a9df0"/></svg>
<div class="a" style="left:484px;top:985px;width:218px;height:32px;border-radius:16px;background:#363f4c"></div>
<svg style="left:494px;top:991px" width="18" height="18" fill="none" stroke="#dfe3e8" stroke-width="1.500"><circle cx="8" cy="8" r="5.500"/><path d="M12 12l5 5"/></svg>
<div class="t" style="left:520px;top:994px;font-size:13.500px;color:#c8cdd3;letter-spacing:-.1px">Search</div>
<svg style="left:640px;top:985px" width="62" height="32"><path d="M6 28l12-10 22 2 16 6-6 4z" fill="#e6c691"/><path d="M20 12l16-3 3 14-15 3z" fill="#e8f5e8"/><path d="M26 14l6-1M26 18l6-1" stroke="#6a9" /><path d="M8 6l2 3 3 1-3 1-1 3-2-3-3-1 3-1z" fill="#e070e0"/><path d="M40 5c5-3 10-1 12 3l2 18H42z" fill="#1f76ee"/><path d="M45 10c3-1 5 1 6 4v9h-7z" fill="#55b0ff"/><path d="M38 8l-2 8" stroke="#f0a030" stroke-width="2"/></svg>
<svg style="left:716px;top:989px" width="24" height="23"><rect x="5" y="0" width="19" height="16" fill="#f2f2f2"/><rect x="0" y="6" width="18" height="16" fill="#7f7f7f" opacity=".9"/></svg>
<svg style="left:759px;top:988px" width="24" height="24"><path d="M12 0a12 12 0 11-7 22l-4 2 1-6A12 12 0 0112 0z" fill="#6c6ad0"/><rect x="6" y="8" width="9" height="8" rx="1.500" fill="#fff"/><path d="M16 11l3-2v6l-3-2z" fill="#fff"/></svg>
<svg style="left:803px;top:988px" width="24" height="24"><circle cx="12" cy="12" r="12" fill="#5f2a91"/><path d="M8 6l2 1.500c1.300-.3 2.700-.3 4 0L16 6l.5 3c1 1 1.500 2.500 1 4-.5 2-2 3-4 3v3h-3v-3c-2 0-3.500-1-4-3-.5-1.500 0-3 1-4z" fill="none" stroke="#fff" stroke-width="1.600"/></svg>
<svg style="left:847px;top:988px" width="24" height="24"><circle cx="12" cy="12" r="12" fill="#5865f2"/><path d="M6 8c3-2 9-2 12 0 1.500 3 2 6 1.500 8-1 .8-2.500 1.200-3.500 1.400l-1-1.500H9l-1 1.500c-1-.2-2.500-.6-3.500-1.400C4 14 4.500 11 6 8z" fill="#fff"/><circle cx="9.500" cy="12.500" r="1.500" fill="#5865f2"/><circle cx="14.500" cy="12.500" r="1.500" fill="#5865f2"/></svg>
<svg style="left:891px;top:988px" width="24" height="24"><circle cx="12" cy="12" r="12" fill="#e33b2e"/><path d="M12 12L22.400 6A12 12 0 0112 24z" fill="#fbc02d"/><path d="M12 12L12 24A12 12 0 011.600 6z" fill="#2e9e44"/><circle cx="12" cy="12" r="6" fill="#fff"/><circle cx="12" cy="12" r="4.500" fill="#2a7de1"/></svg>
<svg style="left:935px;top:988px" width="24" height="24"><path d="M0 2h9l3 3h12v19H0z" fill="#e8a820"/><rect y="6" width="24" height="18" fill="#fcd116"/><rect x="5" y="14" width="14" height="8" fill="#1a8fd0"/></svg>
<svg style="left:979px;top:988px" width="24" height="24"><rect x="1" y="5" width="22" height="19" rx="2" fill="#f2f2f2"/><path d="M7 6V2h10v4" fill="none" stroke="#19a0e6" stroke-width="2"/><rect x="8" y="10" width="3.500" height="3.500" fill="#f25022"/><rect x="12.500" y="10" width="3.500" height="3.500" fill="#7fba00"/><rect x="8" y="14.500" width="3.500" height="3.500" fill="#00a4ef"/><rect x="12.500" y="14.500" width="3.500" height="3.500" fill="#ffb900"/></svg>
<svg style="left:1023px;top:990px" width="24" height="22"><path d="M0 7L12 0l12 7v15H0z" fill="#1aa0ea"/><path d="M0 7l12 8 12-8v2L12 17 0 9z" fill="#0f6cbd"/><path d="M0 9l12 8 12-8v13H0z" fill="#35b6f2"/></svg>
<div class="a" style="left:1058px;top:980px;width:42px;height:40px;border-radius:5px;background:#333c49"></div>
<div class="a" style="left:1067px;top:988px;width:24px;height:24px;background:#000"></div>
<svg style="left:1067px;top:988px" width="24" height="24"><path d="M3 12l7-3 4-6 1 4 6-4-1 7 1 4-5 2-3 4-3-5-4 0z" fill="#ccc"/><circle cx="9" cy="11" r="1.500" fill="#000"/></svg>
<div class="a" style="left:1071px;top:1016px;width:16px;height:3px;border-radius:2px;background:#9fd0f0"></div>
<div class="a" style="left:812px;top:1016px;width:6px;height:3px;border-radius:2px;background:#8a8f96"></div>
<div class="a" style="left:900px;top:1016px;width:6px;height:3px;border-radius:2px;background:#8a8f96"></div>
<div class="a" style="left:944px;top:1016px;width:6px;height:3px;border-radius:2px;background:#8a8f96"></div>

<svg style="left:1250px;top:985px" width="270" height="32" fill="none" stroke="#f0f0f0" stroke-width="1.300">
<path d="M7 18l5-5 5 5" stroke-width="1.800"/>
<path d="M36 20a3.500 3.500 0 011-7 6 6 0 0110-2 5 5 0 016 5 2.500 2.500 0 01-1 4z" fill="#d8d8d8" stroke="none"/>
<path d="M67 20a3.500 3.500 0 011-7 6 6 0 0110-2 5 5 0 016 5 2.500 2.500 0 01-1 4z" fill="#2c8be0" stroke="none"/><circle cx="80" cy="20" r="4.500" fill="#2c8be0" stroke="#fff"/>
<path d="M100 12c5-5 11-5 16 0M103 15c3-3 7-3 10 0M105.500 18c1.500-1.500 3.500-1.500 5 0" stroke-width="1.500"/><circle cx="108" cy="21" r="1.300" fill="#f0f0f0" stroke="none"/>
<path d="M125 13h3l5-4v14l-5-4h-3zM136 12c2 2 2 6 0 8M139 10c3 3 3 9 0 12"/>
<rect x="149" y="11" width="14" height="9" rx="2"/><rect x="151" y="13" width="8" height="5" fill="#f0f0f0" stroke="none"/><path d="M164.500 14v3" stroke-width="1.600"/>
<path d="M252 20c1-1 2-2 2-5a4.500 4.500 0 019 0c0 3 1 4 2 5zM256.500 23h4" stroke-width="1.600" fill="#f0f0f0"/>
</svg>
<div class="t" style="left:1504px;top:991px;font-size:8px;line-height:8px;color:#f0f0f0;letter-spacing:0;font-weight:bold;color:#1f2937">z</div>
<div class="t" style="left:1511px;top:989px;font-size:9px;line-height:9px;color:#f0f0f0;letter-spacing:0;font-weight:bold">z</div>
<div class="t" style="left:1464px;top:985px;font-size:12px;color:#f0f0f0;letter-spacing:.1px">23:35</div>
<div class="t" style="left:1431px;top:1001px;font-size:12px;color:#f0f0f0;letter-spacing:.2px">28/03/2023</div>
</body></html>
